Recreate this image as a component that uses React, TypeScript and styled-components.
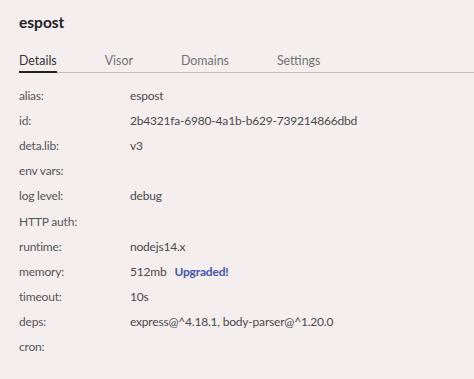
import styled, { createGlobalStyle } from 'styled-components';

const GlobalStyle = createGlobalStyle`
  html, body {
    margin: 0;
    padding: 0;
    background: #f4eeee;
  }
  body {
    font-family: Lato, "Noto Sans", sans-serif;
  }
`;

const rows: { label: string; value?: string; badge?: string }[] = [
  { label: 'alias:', value: 'espost' },
  { label: 'id:', value: '2b4321fa-6980-4a1b-b629-739214866dbd' },
  { label: 'deta.lib:', value: 'v3' },
  { label: 'env vars:' },
  { label: 'log level:', value: 'debug' },
  { label: 'HTTP auth:' },
  { label: 'runtime:', value: 'nodejs14.x' },
  { label: 'memory:', value: '512mb', badge: 'Upgraded!' },
  { label: 'timeout:', value: '10s' },
  { label: 'deps:', value: 'express@^4.18.1, body-parser@^1.20.0' },
  { label: 'cron:' },
];

const tabs = ['Details', 'Visor', 'Domains', 'Settings'];

export default function App() {
  return (
    <>
      <GlobalStyle />
      <Page>
        <Title>espost</Title>
        <TabBar>
          {tabs.map((t, i) => (
            <Tab key={t} $active={i === 0}>
              {t}
            </Tab>
          ))}
        </TabBar>
        <DetailList>
          {rows.map((r) => (
            <Row key={r.label}>
              <Label>{r.label}</Label>
              <Value>
                {r.value}
                {r.badge && <Badge>{r.badge}</Badge>}
              </Value>
            </Row>
          ))}
        </DetailList>
      </Page>
    </>
  );
}

const Page = styled.div`
  width: 474px;
  height: 379px;
  box-sizing: border-box;
  padding: 12px 0 0 19px;
  background: #f4eeee;
  color: #4a4a4a;
  overflow: hidden;
`;

const Title = styled.h1`
  margin: 0;
  font-size: 15.5px;
  font-weight: 700;
  color: #222;
  line-height: 20px;
`;

const TabBar = styled.div`
  margin-top: 21px;
  display: flex;
  gap: 48px;
  border-bottom: 1px solid #c4bfbf;
`;

const Tab = styled.div<{ $active?: boolean }>`
  font-size: 12.4px;
  line-height: 16px;
  padding-bottom: 2px;
  margin-bottom: -1px;
  color: ${(p) => (p.$active ? '#333' : '#727272')};
  border-bottom: 2px solid ${(p) => (p.$active ? '#222' : 'transparent')};
`;

const DetailList = styled.div`
  margin-top: 10px;
  display: flex;
  flex-direction: column;
`;

const Row = styled.div`
  display: grid;
  grid-template-columns: 111px 1fr;
  height: 25.1px;
  align-items: center;
  font-size: 12px;
  letter-spacing: -0.2px;
`;

const Label = styled.span`
  color: #555;
`;

const Value = styled.span`
  color: #4a4a4a;
  display: flex;
  gap: 8px;
`;

const Badge = styled.span`
  color: #4656ad;
  font-weight: 700;
`;
